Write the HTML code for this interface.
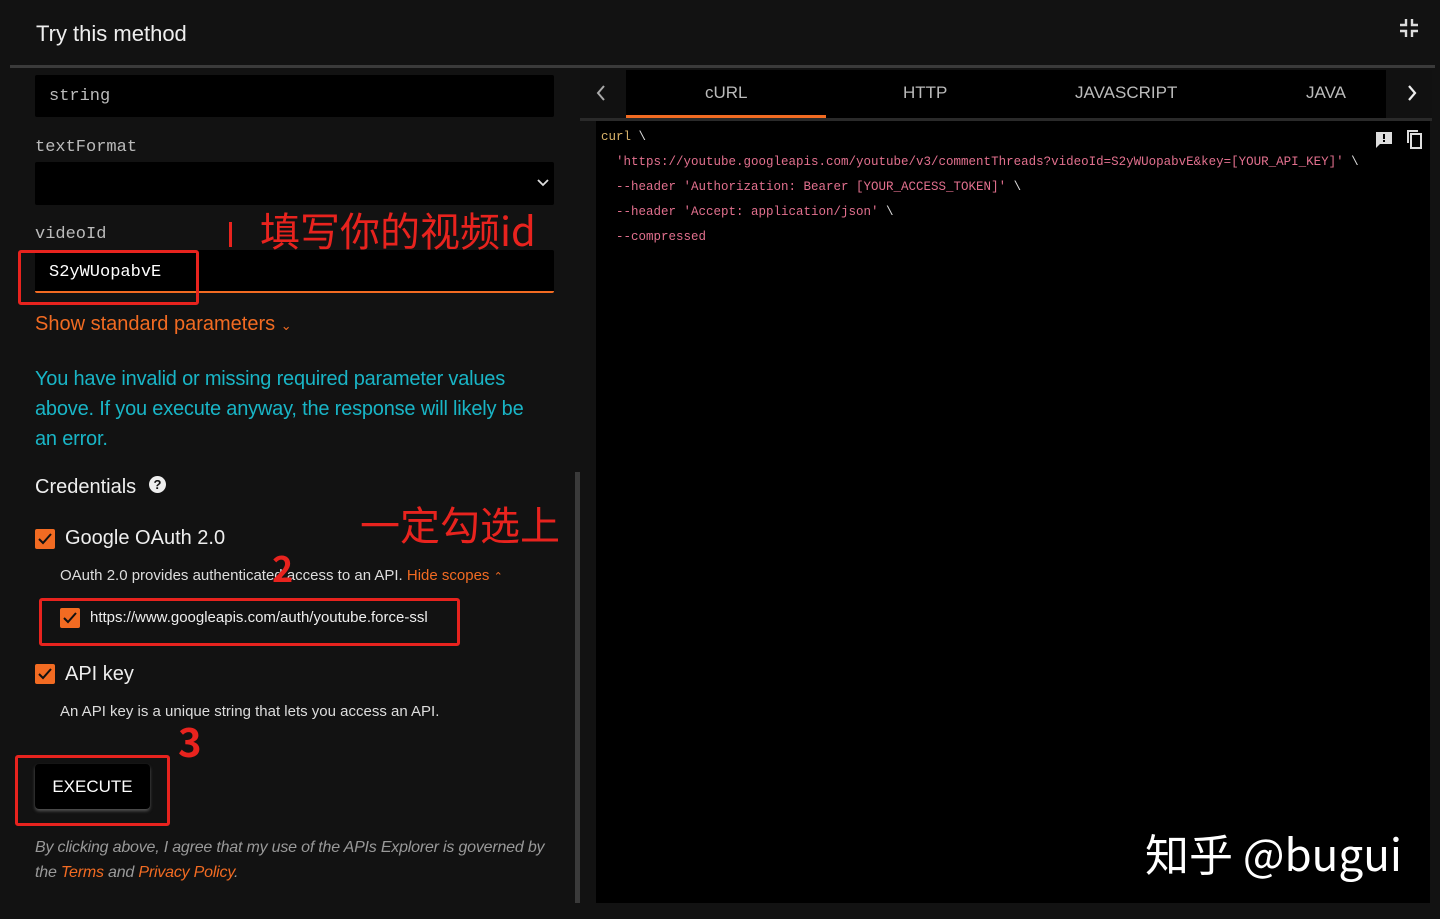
<!DOCTYPE html>
<html><head><meta charset="utf-8"><style>
*{margin:0;padding:0;box-sizing:border-box}
body{width:1440px;height:919px;background:#121212;font-family:"Liberation Sans","Noto Sans CJK SC",sans-serif;position:relative;overflow:hidden;color:#e8e8e8}
.a{position:absolute}
.mono{font-family:"Liberation Mono",monospace}
.inp{background:#000;border-radius:2px}
.cb{width:20px;height:20px;background:#f26b22;border-radius:2px}
.cb svg{display:block}
.red{border:3px solid #e8231e;border-radius:3px}
.code{font-family:"Liberation Mono",monospace;font-size:12.5px;color:#e2708e;white-space:pre}
</style></head><body>
<div class="a" style="left:36px;top:21px;font-size:22px;color:#eee;font-weight:500">Try this method</div>
<svg class="a" style="left:1399px;top:18px" width="20" height="20" viewBox="0 0 20 20" fill="none" stroke="#ddd" stroke-width="2.4"><path d="M7 1v6H1M13 1v6h6M7 19v-6H1M13 19v-6h6"/></svg>
<div class="a" style="left:10px;top:65px;width:1425px;height:3px;background:#3a3a3a"></div>

<div class="a inp" style="left:35px;top:75px;width:519px;height:42px"></div>
<div class="a mono" style="left:49px;top:87px;font-size:17px;color:#bbb">string</div>
<div class="a mono" style="left:35px;top:138px;font-size:17px;color:#bbb">textFormat</div>
<div class="a inp" style="left:35px;top:162px;width:519px;height:43px"></div>
<svg class="a" style="left:537px;top:179px" width="12" height="8" viewBox="0 0 12 8" fill="none" stroke="#ddd" stroke-width="1.8"><path d="M1 1l5 5 5-5"/></svg>
<div class="a mono" style="left:35px;top:225px;font-size:17px;color:#bbb">videoId</div>
<div class="a inp" style="left:35px;top:250px;width:519px;height:43px;border-bottom:2px solid #f26b22"></div>
<div class="a mono" style="left:49px;top:263px;font-size:17px;color:#fff">S2yWUopabvE</div>
<div class="a red" style="left:18px;top:250px;width:181px;height:55px"></div>
<div class="a" style="left:229px;top:222px;width:3px;height:25px;background:#e8231e"></div>
<div class="a" style="left:260px;top:203px;font-size:40px;color:#e8231e;font-family:'Noto Sans CJK SC',sans-serif;line-height:52px">填写你的视频id</div>

<div class="a" style="left:35px;top:313px;font-size:20px;color:#f26b22">Show standard parameters <span style="font-size:13px">⌄</span></div>
<div class="a" style="left:35px;top:364px;width:510px;font-size:20px;line-height:30px;color:#19b5c6;letter-spacing:-0.2px">You have invalid or missing required parameter values above. If you execute anyway, the response will likely be an error.</div>

<div class="a" style="left:35px;top:476px;font-size:20px;color:#eee">Credentials</div>
<div class="a" style="left:149px;top:476px;width:17px;height:17px;border-radius:50%;background:#eee;color:#111;font-size:13px;font-weight:bold;text-align:center;line-height:17px">?</div>
<div class="a" style="left:360px;top:495px;font-size:40px;color:#e8231e;font-family:'Noto Sans CJK SC',sans-serif;line-height:56px">一定勾选上</div>

<div class="a cb" style="left:35px;top:529px"><svg width="20" height="20" viewBox="0 0 20 20" fill="none" stroke="#111" stroke-width="2"><path d="M4 10l4 4 8-9"/></svg></div>
<div class="a" style="left:65px;top:527px;font-size:20px;color:#eee">Google OAuth 2.0</div>
<div class="a" style="left:60px;top:567px;font-size:15px;color:#ddd">OAuth 2.0 provides authenticated access to an API. <span style="color:#f26b22">Hide scopes</span> <span style="color:#f26b22;font-size:11px">⌃</span></div>
<div class="a" style="left:272px;top:545px;font-size:36px;color:#e8231e;font-family:'Noto Sans CJK SC',sans-serif;line-height:44px;font-weight:bold">2</div>
<div class="a red" style="left:39px;top:598px;width:421px;height:48px"></div>
<div class="a cb" style="left:60px;top:608px"><svg width="20" height="20" viewBox="0 0 20 20" fill="none" stroke="#111" stroke-width="2"><path d="M4 10l4 4 8-9"/></svg></div>
<div class="a" style="left:90px;top:609px;font-size:15px;color:#eee">https://www.googleapis.com/auth/youtube.force-ssl</div>

<div class="a cb" style="left:35px;top:664px"><svg width="20" height="20" viewBox="0 0 20 20" fill="none" stroke="#111" stroke-width="2"><path d="M4 10l4 4 8-9"/></svg></div>
<div class="a" style="left:65px;top:663px;font-size:20px;color:#eee">API key</div>
<div class="a" style="left:60px;top:703px;font-size:15px;color:#ddd">An API key is a unique string that lets you access an API.</div>
<div class="a" style="left:178px;top:715px;font-size:40px;color:#e8231e;font-family:'Noto Sans CJK SC',sans-serif;line-height:50px;font-weight:bold">3</div>

<div class="a red" style="left:15px;top:755px;width:155px;height:71px"></div>
<div class="a" style="left:35px;top:764px;width:115px;height:45px;background:#000;border-radius:4px;box-shadow:0 2px 3px #555;color:#fff;font-size:17px;text-align:center;line-height:45px">EXECUTE</div>
<div class="a" style="left:35px;top:835px;width:525px;font-size:16px;line-height:25px;font-style:italic;color:#999;letter-spacing:-0.2px">By clicking above, I agree that my use of the APIs Explorer is governed by the <span style="color:#f26b22">Terms</span> and <span style="color:#f26b22">Privacy Policy</span>.</div>

<div class="a" style="left:575px;top:472px;width:5px;height:431px;background:#3a3a3a"></div>

<div class="a" style="left:580px;top:70px;width:852px;height:48px;background:#000"></div>
<div class="a" style="left:580px;top:70px;width:46px;height:48px;background:#111"></div>
<div class="a" style="left:1386px;top:70px;width:46px;height:48px;background:#111"></div>
<svg class="a" style="left:596px;top:85px" width="10" height="16" viewBox="0 0 10 16" fill="none" stroke="#aaa" stroke-width="2"><path d="M8 1L2 8l6 7"/></svg>
<svg class="a" style="left:1407px;top:85px" width="10" height="16" viewBox="0 0 10 16" fill="none" stroke="#eee" stroke-width="2.2"><path d="M2 1l6 7-6 7"/></svg>
<div class="a" style="left:705px;top:83px;font-size:17px;color:#bbb">cURL</div>
<div class="a" style="left:626px;top:115px;width:200px;height:3px;background:#f26b22"></div>
<div class="a" style="left:903px;top:83px;font-size:17px;color:#bbb">HTTP</div>
<div class="a" style="left:1075px;top:83px;font-size:17px;color:#bbb">JAVASCRIPT</div>
<div class="a" style="left:1306px;top:83px;font-size:17px;color:#bbb">JAVA</div>
<div class="a" style="left:580px;top:118px;width:852px;height:3px;background:#2a2a2a"></div>

<div class="a" style="left:596px;top:121px;width:834px;height:782px;background:#000"></div>
<div class="a code" style="left:601px;top:125px;line-height:25px"><span style="color:#d9b36a">curl</span> <span style="color:#ddd">\</span>
  'https://youtube.googleapis.com/youtube/v3/commentThreads?videoId=S2yWUopabvE&amp;key=[YOUR_API_KEY]' <span style="color:#ddd">\</span>
  --header 'Authorization: Bearer [YOUR_ACCESS_TOKEN]' <span style="color:#ddd">\</span>
  --header 'Accept: application/json' <span style="color:#ddd">\</span>
  --compressed</div>
<svg class="a" style="left:1375px;top:131px" width="18" height="17" viewBox="0 0 18 17"><path d="M1 1h16v12H5l-4 4z" fill="#ddd"/><rect x="8" y="3" width="2" height="5" fill="#000"/><rect x="8" y="9" width="2" height="2" fill="#000"/></svg>
<svg class="a" style="left:1405px;top:129px" width="18" height="20" viewBox="0 0 18 20" fill="none" stroke="#ddd" stroke-width="2"><path d="M3 14V2h10"/><rect x="6" y="5" width="10" height="14"/></svg>

<div class="a" style="left:1145px;top:822px;font-size:44px;color:#fff;font-family:'Noto Sans CJK SC',sans-serif;line-height:60px">知乎 @bugui</div>
</body></html>
